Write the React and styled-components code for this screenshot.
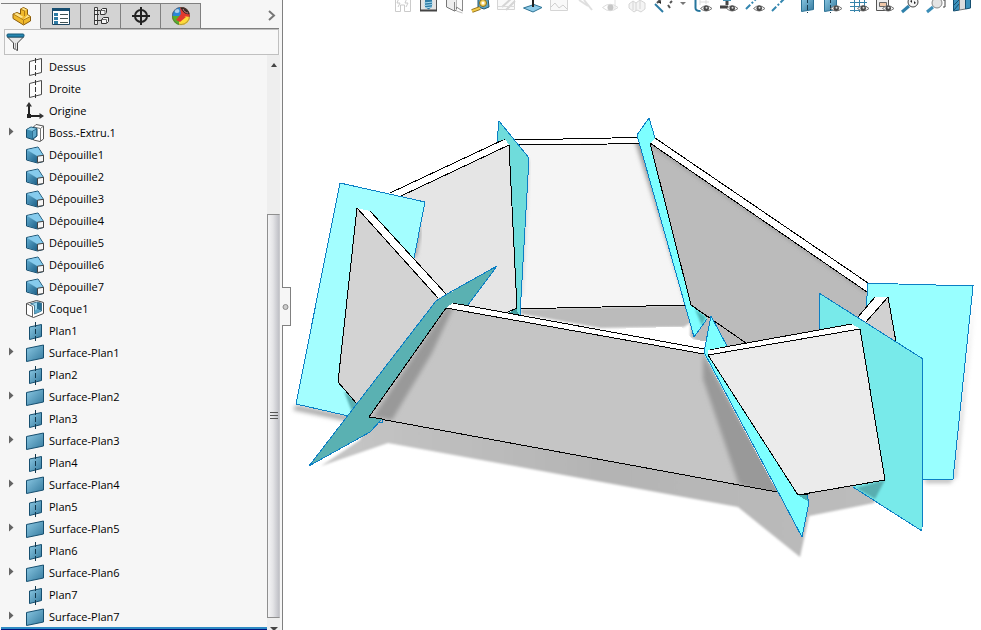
import React, { useState } from 'react';
import styled, { createGlobalStyle } from 'styled-components';

const GlobalStyle = createGlobalStyle`
* { box-sizing: border-box; }
body { margin: 0; font-family: 'Open Sans', 'Noto Sans', sans-serif; font-size: 11px; color: #000; }
button { padding: 0; border: 0; background: none; font: inherit; }
svg { display: block; }
`

const Page = styled.div`
display: flex;
height: 100vh;
overflow: hidden;
background: #fff;
`

const Sidebar = styled.aside`
position: relative;
display: flex;
flex-direction: column;
flex: 0 0 283px;
background: #f6f6f6;
border-right: 1px solid #808080;
`

const TabBar = styled.div`
display: flex;
height: 29px;
padding: 3px 3px 0 1px;
`

const Tab = styled.button`
display: grid;
place-items: center;
width: 40px;
border-top: 1px solid #808080;
border-right: 1px solid #808080;
border-bottom: 1px solid ${({ $active }) => ($active ? '#f6f6f6' : '#808080')};
background: ${({ $active }) => ($active ? '#f6f6f6' : '#d3d3d3')};
`

const TabRest = styled.div`
display: flex;
flex: 1;
justify-content: flex-end;
align-items: center;
border-bottom: 1px solid #808080;
`

const MoreButton = styled.button`
width: 14px;
height: 22px;
`

const FilterBox = styled.label`
display: flex;
align-items: center;
height: 26px;
margin: 0 3px 0 4px;
padding-left: 1px;
border: 1px solid #c0c0c0;
background: #f8f8f8;
`

const FilterInput = styled.input`
flex: 1;
min-width: 0;
border: 0;
outline: 0;
background: transparent;
font: inherit;
`

const TreeArea = styled.div`
display: flex;
flex: 1;
min-height: 0;
overflow: hidden;
`

const TreeColumn = styled.div`
flex: 1;
padding: 1px 0 0 1px;
`

const Tree = styled.ul`
margin: 0;
padding: 0;
list-style: none;
`

const Row = styled.li`
display: grid;
grid-template-columns: 24px 20px 1fr;
align-items: center;
height: 22px;
line-height: 22px;
white-space: nowrap;
`

const Label = styled.span`
padding-left: 4px;
`

const Expand = styled.button`
width: 20px;
height: 20px;
`

const RollbackBar = styled.div`
height: 3px;
margin-top: -1px;
background: #2e8bc4;
border-bottom: 1px solid #00127c;
`

const ScrollBar = styled.div`
display: flex;
flex-direction: column;
flex: 0 0 13px;
margin-right: 2px;
background: #eeeeee;
`

const ScrollButton = styled.button`
display: grid;
justify-items: center;
align-items: ${({ $end }) => ($end ? 'end' : 'center')};
flex: 0 0 ${({ $end }) => ($end ? 12 : 18)}px;
overflow: hidden;
`

const ScrollGap = styled.div`
flex: 142;
`

const Thumb = styled.div`
display: grid;
place-items: center;
flex: 403;
border: 1px solid #8f8f8f;
border-right-color: #c9c9cd;
background: linear-gradient(90deg, #f4f4f5, #e4e4e7 45%, #bfc0c6);
`

const Splitter = styled.button`
position: absolute;
left: 100%;
top: 287px;
display: grid;
place-items: center;
width: 9px;
height: 39px;
border: 1px solid #808080;
border-left: 0;
background: #f6f6f6;
`

const Main = styled.main`
display: flex;
flex-direction: column;
flex: 1;
min-width: 0;
`

const Toolbar = styled.div`
display: flex;
justify-content: flex-end;
align-items: flex-end;
height: 15px;
padding-right: 5px;
overflow: hidden;
`

const Tool = styled.button`
flex: 0 0 ${({ $narrow }) => ($narrow ? 14 : 26)}px;
height: 20px;
opacity: ${({ $off }) => ($off ? 0.3 : 1)};
`

const Scene = styled.svg`
flex: 1;
width: 100%;
min-height: 0;
`

const ItemSvg = ({ children }) => (
  <svg width="20" height="20" viewBox="0 0 20 20" aria-hidden="true">{children}</svg>
)

const RefPlaneIcon = () => (
  <ItemSvg>
    <path d="M4.5 4.5 16.5 1.5V15.5L4.5 18.5Z" fill="#fbfbfb" stroke="#4a4a4a" />
    <path d="M10.5 1v18" stroke="#333" strokeDasharray="5 2" />
  </ItemSvg>
)

const OriginIcon = () => (
  <ItemSvg>
    <path d="M4 4V15H16" fill="none" stroke="#222" strokeWidth="2" />
    <path d="M1 5.500 4 1l3 4.500ZM14.500 12l4.500 3-4.500 3Z" fill="#333" />
    <rect x="2" y="13" width="4" height="4" fill="#222" />
  </ItemSvg>
)

const ExtrudeIcon = () => (
  <ItemSvg>
    <path d="M8.500 4 11 1.500 18.500 3V16L15 18.500 8.500 17Z" fill="#fff" stroke="#555" />
    <path d="M8.500 4 15.500 5.500V18M15.500 5.500 18.500 3" fill="none" stroke="#777" />
    <path d="M1.500 6.500 6 4l6 1.500V13L7.500 16.500 1.500 14.500Z" fill="#3c8bb0" stroke="#154a68" />
    <path d="M2 6.500 6 4.500l5.500 1.200L7.500 8Z" fill="#8fcfea" />
    <path d="M7.500 8v8l4-3.200V6Z" fill="#5fa9cc" stroke="#1d5675" strokeWidth=".6" />
  </ItemSvg>
)

const DraftIcon = () => (
  <ItemSvg>
    <path d="M1.500 4.500 13 2 18.500 10.500V16.500L12.500 18 1.500 15Z" fill="url(#blueFace)" stroke="#174f70" />
    <path d="M2.500 4.800 12.800 2.600 18 10.200 12.500 11.200Z" fill="#86cbed" />
    <path d="M2 5 12.300 11.500V17.400L2 14.600Z" fill="url(#darkFace)" />
    <path d="M12.500 11.200 18.500 10.300V16.500L12.500 17.500Z" fill="#f6f6f6" stroke="#444" />
  </ItemSvg>
)

const ShellIcon = () => (
  <ItemSvg>
    <path d="M1.500 4.500 11.500 1.500l7 2V14.500L8.500 18.500l-7-3Z" fill="#fff" stroke="#4b4b4b" />
    <path d="M1.500 4.500 7.500 7.500V18" fill="none" stroke="#666" />
    <path d="M5.500 4.800 12 3l4.500 1.200V12L9.500 15V6.500Z" fill="#9bd6ee" stroke="#235b78" strokeWidth=".8" />
    <path d="M12 3.200v6.800l4.500 2V4.300Z" fill="#286f94" />
    <path d="M9.500 14.800V12L12 10l4.300 2Z" fill="#57a3c6" />
  </ItemSvg>
)

const PlaneIcon = () => (
  <ItemSvg>
    <path d="M4.500 6 16.500 3.500V15.500L4.500 18.500Z" fill="url(#blueFace)" stroke="#164f70" />
    <path d="M10.500 1v19" stroke="#12364b" strokeDasharray="5 2" />
  </ItemSvg>
)

const SurfaceIcon = () => (
  <ItemSvg>
    <path d="M1.500 5.500 18.500 2V15L1.500 18.500Z" fill="url(#blueFace)" stroke="#164f70" />
  </ItemSvg>
)

const icons = {
  ref: RefPlaneIcon,
  origin: OriginIcon,
  extrude: ExtrudeIcon,
  draft: DraftIcon,
  shell: ShellIcon,
  plane: PlaneIcon,
  surface: SurfaceIcon,
}

const numbers = [1, 2, 3, 4, 5, 6, 7]

const features = [
  { name: 'Dessus', icon: 'ref' },
  { name: 'Droite', icon: 'ref' },
  { name: 'Origine', icon: 'origin' },
  { name: 'Boss.-Extru.1', icon: 'extrude', expandable: true },
  ...numbers.map((n) => ({ name: `Dépouille${n}`, icon: 'draft' })),
  { name: 'Coque1', icon: 'shell' },
  ...numbers.flatMap((n) => [
    { name: `Plan${n}`, icon: 'plane' },
    { name: `Surface-Plan${n}`, icon: 'surface', expandable: true },
  ]),
]

const Feature = ({ name, icon, expandable }) => {
  const Icon = icons[icon]
  return (
    <Row>
      {expandable ? (
        <Expand aria-label={`Développer ${name}`}>
          <svg width="20" height="20"><path d="M8 4.500 12.500 8.500 8 12.500Z" fill="#646464" /></svg>
        </Expand>
      ) : <span />}
      <Icon />
      <Label>{name}</Label>
    </Row>
  )
}

const tabs = [
  {
    name: 'Arbre de création',
    art: (
      <>
        <path d="M3 9 7 7.500 10.500 9V4L13.500 2.500 17.500 4.500V9.500L20.500 11.500V16L13.500 20 3 13.500Z" fill="#f0b92c" stroke="#8a5c0c" />
        <path d="M3.500 9 7 8l6.500 4-3.500 1.200ZM11 4l2.500-1 3.500 1.700-2.500 1ZM13.500 14.500l4-4.500 2.500 1.700-6 3.300Z" fill="#ffe48a" />
        <path d="M3.500 9.200 13.500 15V19.500M13.500 15l7-3.500M10.500 4.300l4 1.500V11" fill="none" stroke="#b07d18" />
      </>
    ),
  },
  {
    name: 'Propriétés',
    art: (
      <>
        <path d="M2.500 3.500h17v16h-17Z" fill="#fff" stroke="#1c4560" />
        <path d="M2 3h18v3H2Z" fill="#174e70" />
        <path d="M4 8h4v3H4ZM4 12h4v3H4ZM4 16h4v3H4Z" fill="#2e7ba5" />
        <path d="M10 9.500h8M10 13.500h8M10 17.500h8" stroke="#455" />
      </>
    ),
  },
  {
    name: 'Configurations',
    art: (
      <>
        <path d="M4.500 2.500h3v17h-3Z" fill="#eee" stroke="#444" />
        <path d="M4 5.500h7M4 9.500h5M4 15.500h7" stroke="#333" />
        <path d="M10.500 5.500l2-2h4v4l-1.500 2h-4.500ZM11.500 14.500l2-2h5v4l-2 2h-5Z" fill="#f4f4f4" stroke="#333" />
        <path d="M10.500 5.500h4.500v4M11.500 14.500h5v4" fill="none" stroke="#666" />
      </>
    ),
  },
  {
    name: 'DimXpert',
    art: (
      <>
        <circle cx="11" cy="11" r="6" fill="none" stroke="#222" strokeWidth="2" />
        <path d="M11 2v18M2 11h18" stroke="#222" strokeWidth="2" />
      </>
    ),
  },
  {
    name: 'Affichage',
    art: (
      <>
        <circle cx="11" cy="11" r="9" fill="#e23a2e" />
        <path d="M11 11 2 11A9 9 0 0 1 10 2Z" fill="#2b87d8" />
        <path d="M9 11 2 11A9 9 0 0 0 9 20Z" fill="#59b02d" />
        <path d="M13 11 20 12A9 9 0 0 1 9 20V14Z" fill="#ffda3a" />
        <path d="M6 15 11 9l5 3-6 5Z" fill="#e23a2e" />
        <path d="M10.500 2.500c4-1 8 1.500 9 6.500-4 1-7-2-9-6.500Z" fill="#342522" />
        <path d="M13 4c1 2.500 3 4 5 4" stroke="#d88" fill="none" />
        <ellipse cx="7" cy="6" rx="2.500" ry="2" fill="#fff" opacity=".6" />
        <circle cx="11" cy="11" r="8.500" fill="none" stroke="#554" strokeOpacity=".5" />
      </>
    ),
  },
]

const Eye = () => (
  <>
    <path d="M8.500 13.500Q14 8 20 13.500 14 18.500 8.500 13.500Z" fill="#f6f6f6" stroke="#777" />
    <circle cx="14.200" cy="13.300" r="2.700" fill="#484848" />
    <circle cx="14.500" cy="12.700" r="1" fill="#ddd" />
  </>
)

/* The strip is scrolled half out of sight: only the lower part of each drawing shows. */
const tools = [
  { name: 'Coupe', off: true, art: <path d="M5.500 3v13.500h5V10h4v6.500h6V3M9 3 7 8h3l-2 4M17 3l-2 5h3l-2 4" fill="none" stroke="#555" /> },
  { name: 'Filetage', art: <><path d="M4.500 3.500h16v12h-16Z" fill="#e4e4e4" stroke="#555" /><path d="M4 15.500h17" stroke="#444" strokeWidth="2" /><path d="M9 5h7v7l-3.500 2.500L9 12Z" fill="#2f7da6" /><path d="M8 8l9-1M8 10.500l9-1M9 13l7-1" stroke="#a9dbf0" /></> },
  { name: 'Volume', art: <><path d="M4.500 4v8l8 4 2-1V4Z" fill="#eee" stroke="#777" /><path d="M12.500 7v9M14.500 4l6-1v13l-6-4" fill="#fafafa" stroke="#888" /><path d="M14.500 14v2l6 2" stroke="#bbb" fill="none" /></> },
  { name: 'Mesurer', art: <><path d="M10 3h10l1 9-5 2-6-2Z" fill="#5aa3c6" stroke="#24566f" /><circle cx="15" cy="8" r="3.500" fill="#f4d260" stroke="#8a6b16" /><circle cx="15" cy="8" r="1.500" fill="#fff" /><path d="M4 16l8-3" stroke="#8f6b14" strokeWidth="4" /><path d="M4 16l8-3" stroke="#f2cb4b" strokeWidth="2" /></> },
  { name: 'Propriétés de masse', off: true, art: <><path d="M3.500 3v11.500h17V3" fill="#eee" stroke="#777" /><path d="M8 12 18 3M12 15l9-9" stroke="#777" strokeWidth="2" /><path d="M4 11.500h17" stroke="#888" /></> },
  { name: 'Point de repère', art: <><path d="M3.500 13 14 9.500l8 3-9 4.500Z" fill="#8ecbe8" stroke="#2c7294" /><path d="M13 0v12" stroke="#222" strokeWidth="2" /></> },
  { name: 'Image', off: true, art: <><path d="M4.500 3v12.500h17V3" fill="#eee" stroke="#777" /><path d="M5 12l4-4 4 5 4-3 4 4" fill="none" stroke="#666" /></> },
  { name: 'Baguette', off: true, art: <path d="M7 5l9 6M12 5l8 10" stroke="#999" strokeWidth="2" /> },
  { name: 'Masquer', off: true, art: <><path d="M4.500 12.500Q12 6 20 12.500 12 19 4.500 12.500Z" fill="#fff" stroke="#888" /><circle cx="12.500" cy="12.500" r="3" fill="#444" /><path d="M17 4v10" stroke="#999" /></> },
  { name: 'Assemblage', off: true, art: <path d="M5 9l4-3 3 2 4-3 5 3v6l-4 3-4-2-3 2-5-4Z M9 6v9M16 5v9M12 8v8" fill="#ddd" stroke="#777" /> },
  { name: 'Esquisse', art: <><path d="M5 9 13 17" stroke="#2c7ca5" strokeWidth="2" /><path d="M7 8 11 4M20 8l2-2M18 10l2 3" stroke="#555" strokeWidth="2" /><path d="M8 7l3-1v3Z" fill="#222" /></> },
  { name: "Plus d'options", narrow: true, art: <path d="M4 7h6l-3 3Z" fill="#777" /> },
  { name: 'Voir esquisses', art: <><path d="M5.500 0v13q0 3 5 3" fill="none" stroke="#27769d" strokeWidth="2" /><path d="M10 7h9M10 4v6M16 3v6" stroke="#ddd" /><g transform="translate(2 0)"><Eye /></g></> },
  { name: 'Voir origines', art: <><path d="M11 0v10M4 12h8" stroke="#444" strokeWidth="3" /><path d="M7 5h8" stroke="#438eb0" strokeWidth="2" /><g transform="translate(2 0)"><Eye /></g></> },
  { name: 'Voir axes', art: <><path d="M4 14 18 0" stroke="#3486af" strokeWidth="2" strokeDasharray="6 2 2 2" /><g transform="translate(3 0)"><Eye /></g></> },
  { name: 'Axe', art: <path d="M4 16 16 4" stroke="#3486af" strokeWidth="2" strokeDasharray="6 2 2 2" /> },
  { name: 'Plan', art: <><path d="M7.500 3v13.500l12-2V3Z" fill="url(#blueFace)" stroke="#2b7194" /><path d="M13.500 3v15" stroke="#18394c" strokeDasharray="5 2" /></> },
  { name: 'Voir plans', art: <><path d="M4.500 3v13.500l12-2V3Z" fill="url(#blueFace)" stroke="#2b7194" /><path d="M10.500 3v15" stroke="#18394c" strokeDasharray="5 2" /><g transform="translate(2 0)"><Eye /></g></> },
  { name: 'Voir la grille', art: <><path d="M4 7.500h17M4 11.500h17M4 15.500h9M8.500 3v14M13.500 3v14M18.500 3v8" stroke="#3784ab" /><g transform="translate(3 0)"><Eye /></g></> },
  { name: 'Voir annotations', art: <><path d="M4.500 3v12.500h12V3Z" fill="#eee" stroke="#555" /><path d="M7.500 7.500h7v4h-7Z" fill="#f0c8a8" stroke="#666" /><g transform="translate(2 0)"><Eye /></g></> },
  { name: 'Zoom au mieux', art: <><path d="M4 17 11 11" stroke="#2f80aa" strokeWidth="3" /><circle cx="15" cy="7" r="5" fill="#f4f4f4" stroke="#444" /><path d="M12 6l2-1v3ZM18 8l-2 1V6Z" fill="#222" /></> },
  { name: 'Zoom fenêtre', art: <><path d="M3 17 9 12" stroke="#3b8db7" strokeWidth="3" /><circle cx="13" cy="8" r="5" fill="#e4e4e4" stroke="#888" /><path d="M19 5h2M21 5v7h-2" fill="none" stroke="#444" /></> },
  { name: 'Vue en coupe', art: <><path d="M3.500 4v12l6-1V3Z" fill="#3c91bb" stroke="#164f70" /><path d="M4 10l5-5M4 15l5-6" stroke="#164f70" /><path d="M9.500 3v12l6-1V3Z" fill="#ddd" stroke="#777" /><path d="M15.500 3v11l5-1V3Z" fill="#3c91bb" stroke="#164f70" /></> },
]

/* Model colours and shared stroke settings */
const Edge = styled.path`
fill: none;
stroke: #000;
shape-rendering: crispEdges;
`

const Face = styled.path`
fill: ${({ $tone }) => $tone};
shape-rendering: crispEdges;
`

const PlaneEdge = styled(Edge)`
stroke: #0b7fc4;
`

const Shade = styled.path`
fill: ${({ $tone }) => $tone};
filter: url(#${({ $blur }) => $blur || 'soft'});
`

const Model = () => (
  <Scene viewBox="283 15 698 615" role="img" aria-label="Modèle 3D">
    <defs>
      <filter id="soft" x="-20%" y="-20%" width="140%" height="140%"><feGaussianBlur stdDeviation="2" /></filter>
      <filter id="slight" x="-20%" y="-20%" width="140%" height="140%"><feGaussianBlur stdDeviation="1" /></filter>
      <linearGradient id="ground" x1="0" x2="1">
        <stop offset="0" stopColor="#c6c6c6" />
        <stop offset=".5" stopColor="#b4b4b4" />
        <stop offset="1" stopColor="#bdbdbd" />
      </linearGradient>
      <clipPath id="backClip"><path d="M521 144H641L694 305 521 309Z" /></clipPath>
      <clipPath id="rightClip"><path d="M650 143 867 292V325L746 343 691 305Z" /></clipPath>
      <clipPath id="frontClip"><path d="M446 308 704 354 777 492 369 417Z" /></clipPath>
    </defs>

    <Shade $tone="url(#ground)" $blur="slight" d="M321 466 360 440 370 415 780 485 885 480 874 503 809 516 800 557 738 507 640 489 388 443Z" />
    <Shade $tone="#aaa" d="M296 405 356 417 350 422 293 410Z" />
    <Shade $tone="#bbb" d="M925 478H953L951 483H925ZM975 292 956 478 953 479Z" />
    <Shade $tone="#bbb" $blur="slight" d="M521 309 691 305 698 318 684 327 600 328 521 314Z" />
    <Shade $tone="#bbb" $blur="slight" d="M691 305 746 343 708 346 690 337Z" />
    <Face $tone="#fff" d="M630 328 682 327 693 340 706 341V351L600 332Z" />
    <Face $tone="#bbb" d="M711 318 746 343 727 347Z" />

    <Face $tone="#f5f5f5" d="M521 144 641 143 692 305 521 309Z" />
    <g clipPath="url(#backClip)">
      <Shade $tone="#999" d="M634 138 690 315 698 305 646 138Z" />
      <Shade $tone="#ccc" d="M529 160 522 295 520 295V160Z" />
    </g>
    <Edge d="M515 140 612 138 638 137M516 145 608 144 640 143M521 309 557 308 691 305" />

    <Face $tone="#fff" d="M390 193 505 139 509 145 402 196Z" />
    <Face $tone="#e5e5e5" d="M401 196 509 145 517 308 505 313 430 300 400 290Z" />
    <Shade $tone="#888" d="M420 235 416 256 412 258 420 220Z" />
    <Edge d="M390 193 505 139M401 196 509 145 517 308 508 312" />

    <Face $tone="#6fdcdb" d="M499 121 529 158 520 315 508 313 517 308 509 145 505 139 497 142Z" />
    <Face $tone="#429e9e" d="M508 313 517 308 518 315Z" />
    <PlaneEdge d="M497 142 499 121 529 158 520 315" />
    <Edge d="M509 145 517 308 508 312" />

    <Face $tone="#bbbbbb" d="M650 143 867 292V325L746 343 691 305Z" />
    <g clipPath="url(#rightClip)">
      <Shade $tone="#999" d="M650 140 867 288V293L650 145Z" />
    </g>
    <Face $tone="#fff" d="M655 138 868 283V292L650 143Z" />
    <Edge d="M655 138 868 283M867 292 650 143 691 305 746 343" />

    <Face $tone="#7dffff" d="M649 118 655 138 650 143 691 305 707 318 694 337 637 135Z" />
    <Shade $tone="#50b6b6" $blur="slight" d="M695 309 706 317 702 326Z" />
    <PlaneEdge d="M655 138 649 118 637 135 694 337 707 319" />
    <Edge d="M650 143 691 305 708 317" />

    <Face $tone="#98ffff" d="M868 283 973 286 953 479H870L866 307Z" />
    <PlaneEdge d="M866 310 868 283 898 284 973 286 953 479H920" />

    <Face $tone="#d1d1d1" d="M888 297 896 342 864 322Z" />
    <Face $tone="#fff" d="M875 297H888L866 322 858 317Z" />
    <Edge d="M875 297 858 317M866 322 888 297 896 342" />

    <Face $tone="#78eaea" d="M819 293 923 359 922 531 853 487 840 400 819 330Z" />
    <Shade $tone="#58aeb0" $blur="slight" d="M856 488 885 480 875 499Z" />
    <PlaneEdge d="M819 330V293L923 359 922 531 853 487" />

    <Face $tone="#fff" d="M708 350 852 324 860 329 708 355Z" />
    <Face $tone="#ebebeb" d="M708 355 860 329 885 480 798 495Z" />
    <Edge d="M708 350 852 324M708 355 860 329 885 480 798 495Z" />

    <Face $tone="#c5c5c5" d="M446 308 704 354 777 492 369 417Z" />
    <g clipPath="url(#frontClip)">
      <Shade $tone="#999" d="M446 308 373 417 392 420 432 353 454 306Z" />
      <Shade $tone="#999" d="M703 354 703 379 739 485 785 498 740 420Z" />
    </g>
    <Face $tone="#fff" d="M453 303 704 349V354L446 308Z" />
    <Edge d="M453 303 704 349M446 308 704 354M369 417 777 492" />

    <Face $tone="#7dffff" d="M711 316 727 346 708 350V355L798 495 807 494 809 502 802 537 704 354Z" />
    <Face $tone="#4eaeb0" d="M798 495 807 494 809 502Z" />
    <PlaneEdge d="M727 346 711 316 704 352 802 537 809 502 807 495" />
    <Edge d="M708 355 798 495 808 494" />

    <Face $tone="#a3feff" d="M340 183 425 202 414 258 400 320 366 415 366 420 296 404Z" />
    <PlaneEdge d="M414 258 425 202 340 183 296 404 366 420M376 422H382V420" />
    <Shade $tone="#58aeb0" $blur="slight" d="M344 391 360 405 352 412Z" />
    <Face $tone="#d3d3d3" d="M357 208 438 298 436 302 357 404 338 382Z" />
    <Face $tone="#e5e5e5" d="M414 258 440 270 470 303 453 303 446 294Z" />
    <Face $tone="#fff" d="M357 208 370 211 446 294 438 298Z" />
    <Edge d="M370 211 446 294M438 298 357 208 338 382 357 404" />

    <Face $tone="#5ab1b2" d="M497 266 468 305 453 303 446 308 369 417 382 419 370 432 309 466 436 301Z" />
    <PlaneEdge d="M468 305 497 266 447 294 436 301 309 466 370 432 381 420" />
    <Edge d="M446 308 369 417 382 419" />
  </Scene>
)

const App = () => {
  const [active, setActive] = useState(0)
  return (
    <Page>
      <GlobalStyle />
      <Sidebar>
        <TabBar role="tablist">
          {tabs.map((tab, i) => (
            <Tab key={tab.name} role="tab" aria-label={tab.name} aria-selected={i === active} $active={i === active} onClick={() => setActive(i)}>
              <svg width="22" height="22" viewBox="0 0 22 22">{tab.art}</svg>
            </Tab>
          ))}
          <TabRest>
            <MoreButton aria-label="Plus d'onglets">
              <svg width="14" height="22"><path d="M4 6 9 10.500 4 15" fill="none" stroke="#777" strokeWidth="2" /></svg>
            </MoreButton>
          </TabRest>
        </TabBar>
        <FilterBox>
          <svg width="20" height="20" viewBox="0 0 20 20" aria-hidden="true">
            <linearGradient id="blueFace" x1="0" y1="0" x2="1" y2="1">
              <stop offset="0" stopColor="#8cc9e4" />
              <stop offset="1" stopColor="#34799d" />
            </linearGradient>
            <linearGradient id="darkFace" x1="0" y1="0" x2="1" y2="1">
              <stop offset="0" stopColor="#5fabd0" />
              <stop offset="1" stopColor="#1d5f86" />
            </linearGradient>
            <path d="M1.500 5 7.500 11V16.500L11.500 18.500V11L17.500 5Z" fill="#e6e6e6" stroke="#444" />
            <path d="M9.500 11v7" stroke="#999" />
            <rect x="1" y="2" width="17" height="3" rx="1" fill="#2586b0" stroke="#155878" />
          </svg>
          <FilterInput type="text" aria-label="Filtre" />
        </FilterBox>
        <TreeArea>
          <TreeColumn>
            <Tree>
              {features.map((feature) => <Feature key={feature.name} {...feature} />)}
            </Tree>
            <RollbackBar />
          </TreeColumn>
          <ScrollBar>
            <ScrollButton aria-label="Défiler vers le haut">
              <svg width="8" height="5"><path d="M1 5 4 1l3 4Z" fill="#444" /></svg>
            </ScrollButton>
            <ScrollGap />
            <Thumb>
              <svg width="8" height="8"><path d="M0 .5h8M0 3.500h8M0 6.500h8" stroke="#555" /></svg>
            </Thumb>
            <ScrollButton $end aria-label="Défiler vers le bas">
              <svg width="8" height="3"><path d="M0 0h8L5 3H3Z" fill="#444" /></svg>
            </ScrollButton>
          </ScrollBar>
        </TreeArea>
        <Splitter aria-label="Réduire le panneau">
          <svg width="8" height="8"><circle cx="3.500" cy="4" r="2.500" fill="#ccc" stroke="#888" /></svg>
        </Splitter>
      </Sidebar>
      <Main>
        <Toolbar role="toolbar">
          {tools.map(({ name, art, off, narrow }) => (
            <Tool key={name} aria-label={name} $off={off} $narrow={narrow}>
              <svg width={narrow ? 14 : 26} height="20">{art}</svg>
            </Tool>
          ))}
        </Toolbar>
        <Model />
      </Main>
    </Page>
  )
}

export default App;
